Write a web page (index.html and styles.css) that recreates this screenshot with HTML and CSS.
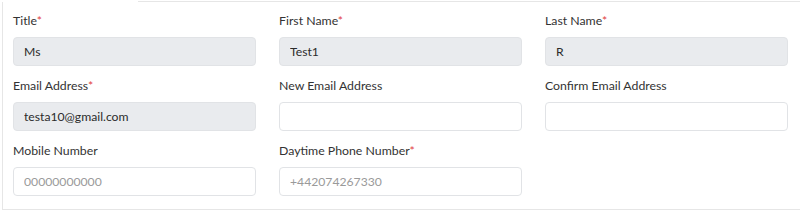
FILE: index.html
```html
<!DOCTYPE html>
<html lang="en">

<head>
    <meta charset="UTF-8">
    <meta name="viewport" content="width=device-width, initial-scale=1.0">
    <title>Personal Details</title>
    <link rel="stylesheet" href="styles.css">
</head>

<body>
    <div class="tabLine">
        <div class="tabGap"></div>
        <div class="tabRest"></div>
    </div>
    <div class="panel">
        <form class="formGrid">
            <div class="field">
                <label>Title<span class="req">*</span></label>
                <input type="text" value="Ms" disabled>
            </div>
            <div class="field">
                <label>First Name<span class="req">*</span></label>
                <input type="text" value="Test1" disabled>
            </div>
            <div class="field">
                <label>Last Name<span class="req">*</span></label>
                <input type="text" value="R" disabled>
            </div>
            <div class="field">
                <label>Email Address<span class="req">*</span></label>
                <input type="text" value="testa10@gmail.com" disabled>
            </div>
            <div class="field">
                <label>New Email Address</label>
                <input type="text">
            </div>
            <div class="field">
                <label>Confirm Email Address</label>
                <input type="text">
            </div>
            <div class="field">
                <label>Mobile Number</label>
                <input type="text" placeholder="00000000000">
            </div>
            <div class="field">
                <label>Daytime Phone Number<span class="req">*</span></label>
                <input type="text" placeholder="+442074267330">
            </div>
        </form>
    </div>
</body>

</html>
```

FILE: styles.css
```css
body {
    margin: 0;
    overflow: hidden;
    background: #fff;
    font-family: Lato, "Open Sans", sans-serif;
    color: #333;
}

.tabLine {
    display: flex;
    margin-left: 2px;
    margin-top: 1px;
}

.tabGap {
    width: 136px;
}

.tabRest {
    flex: 1;
    border-bottom: 1px solid #e6e6e6;
}

.panel {
    width: 800px;
    box-sizing: border-box;
    margin-left: 2px;
    border: 1px solid #e6e6e6;
    border-top: 0;
    padding: 9px 0 13px 10px;
}

.formGrid {
    display: grid;
    grid-template-columns: 243px 243px 243px;
    column-gap: 23px;
    row-gap: 10px;
    margin: 0;
}

.field label {
    display: block;
    font-size: 12.3px;
    line-height: 20px;
    margin-bottom: 6px;
    color: #333;
}

.req {
    color: #e2423f;
}

.field input {
    display: block;
    width: 100%;
    height: 29px;
    box-sizing: border-box;
    border: 1px solid #e1e3e6;
    border-radius: 4px;
    padding: 0 10px;
    font-family: Lato, "Open Sans", sans-serif;
    font-size: 12.2px;
    color: #333;
    background: #fff;
}

.field input:disabled {
    background: #e9ebee;
    color: #2b2b2b;
    -webkit-text-fill-color: #2b2b2b;
    opacity: 1;
}

.field input::placeholder {
    color: #9a9a9a;
}
```
